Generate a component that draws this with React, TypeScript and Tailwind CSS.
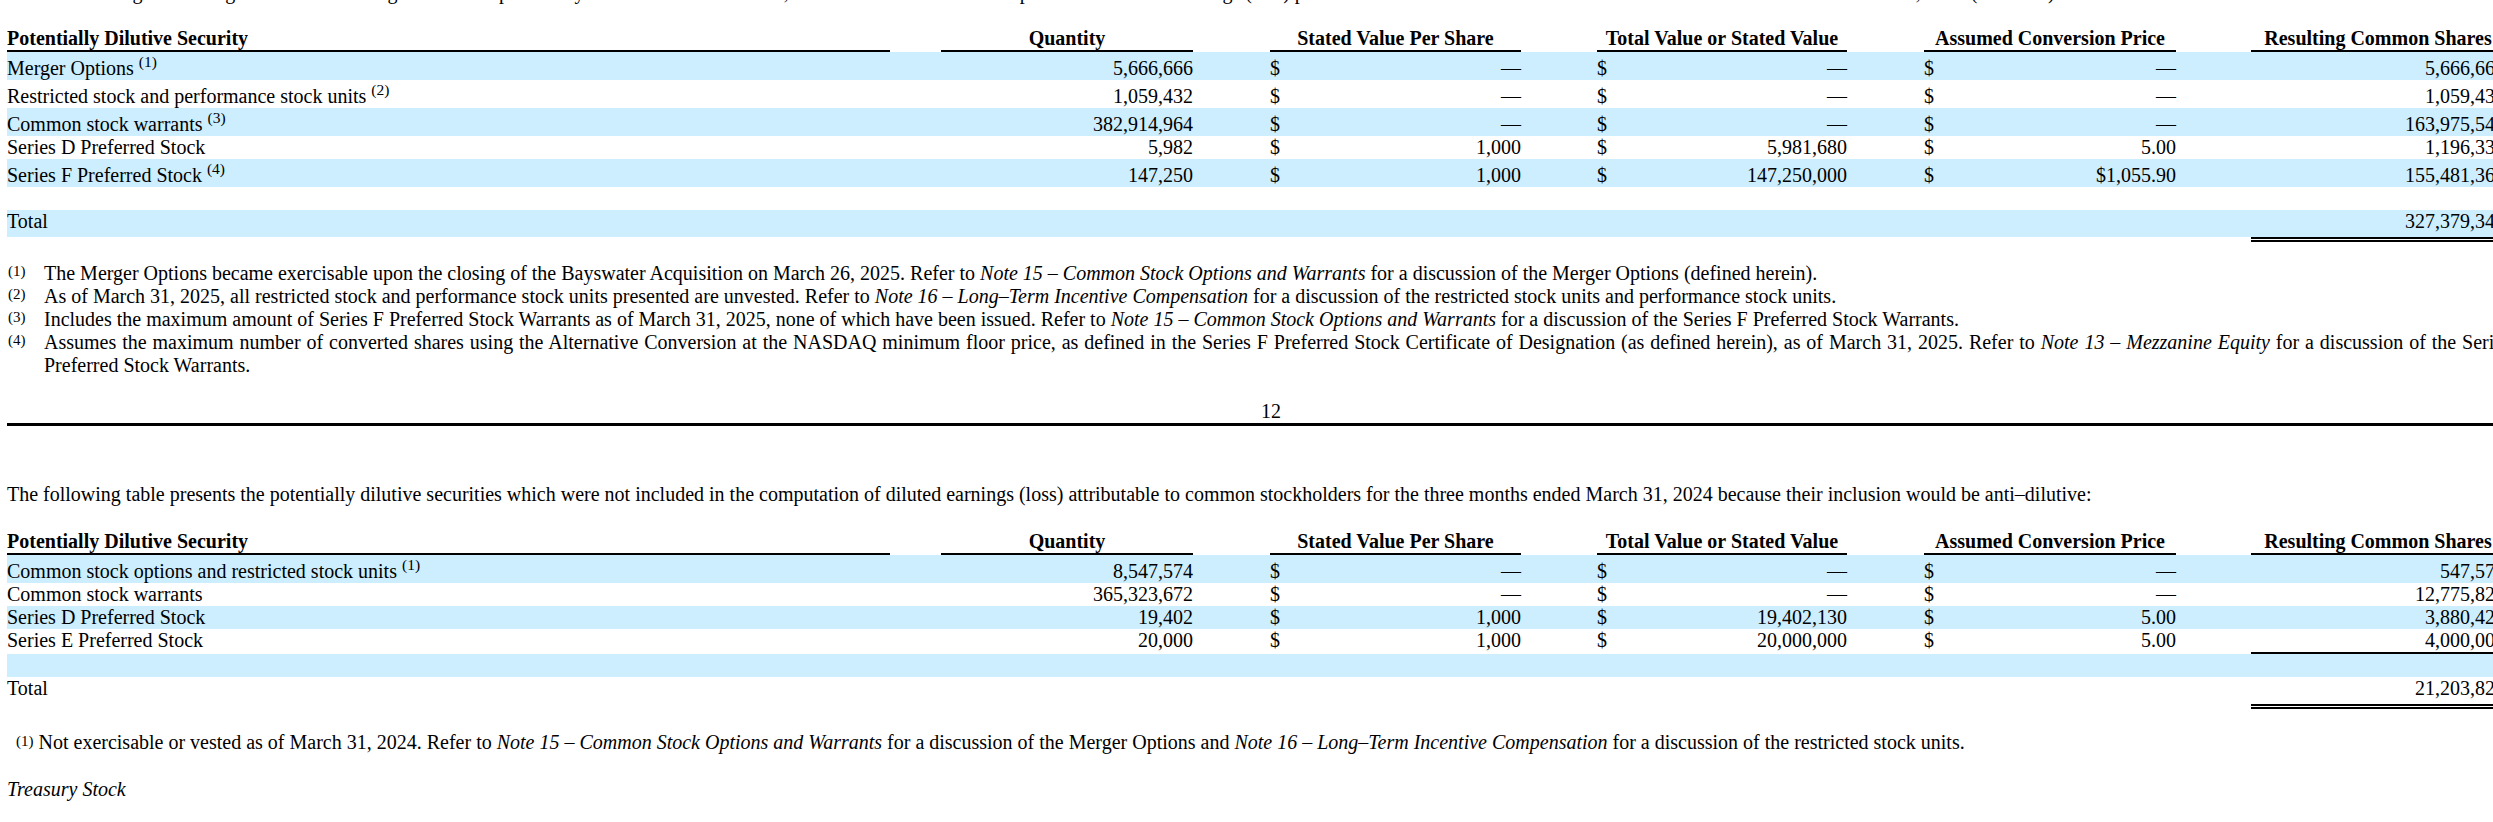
import React from "react";

type Row = {
  label?: string;
  sup?: string;
  qty?: string;
  svps?: string;
  tv?: string;
  acp?: string;
  rcs?: string;
  blue?: boolean;
  total?: boolean;
};

const table2025: Row[] = [
  { label: "Merger Options", sup: "(1)", qty: "5,666,666", svps: "—", tv: "—", acp: "—", rcs: "5,666,666", blue: true },
  { label: "Restricted stock and performance stock units", sup: "(2)", qty: "1,059,432", svps: "—", tv: "—", acp: "—", rcs: "1,059,432" },
  { label: "Common stock warrants", sup: "(3)", qty: "382,914,964", svps: "—", tv: "—", acp: "—", rcs: "163,975,544", blue: true },
  { label: "Series D Preferred Stock", qty: "5,982", svps: "1,000", tv: "5,981,680", acp: "5.00", rcs: "1,196,336" },
  { label: "Series F Preferred Stock", sup: "(4)", qty: "147,250", svps: "1,000", tv: "147,250,000", acp: "$1,055.90", rcs: "155,481,362", blue: true },
];

const table2024: Row[] = [
  { label: "Common stock options and restricted stock units", sup: "(1)", qty: "8,547,574", svps: "—", tv: "—", acp: "—", rcs: "547,574", blue: true },
  { label: "Common stock warrants", qty: "365,323,672", svps: "—", tv: "—", acp: "—", rcs: "12,775,824" },
  { label: "Series D Preferred Stock", qty: "19,402", svps: "1,000", tv: "19,402,130", acp: "5.00", rcs: "3,880,426", blue: true },
  { label: "Series E Preferred Stock", qty: "20,000", svps: "1,000", tv: "20,000,000", acp: "5.00", rcs: "4,000,000" },
];

function Money({ w, v }: { w: string; v?: string }) {
  return (
    <div className={`${w} shrink-0 flex justify-between`}>
      <span>{v ? "$" : ""}</span>
      <span>{v}</span>
    </div>
  );
}

function Header() {
  return (
    <div className="flex font-bold">
      <div className="w-[883px] shrink-0 border-b-2 border-black">Potentially Dilutive Security</div>
      <div className="w-[51px] shrink-0" />
      <div className="w-[252px] shrink-0 border-b-2 border-black text-center">Quantity</div>
      <div className="w-[77px] shrink-0" />
      <div className="w-[251px] shrink-0 border-b-2 border-black text-center">Stated Value Per Share</div>
      <div className="w-[76px] shrink-0" />
      <div className="w-[250px] shrink-0 border-b-2 border-black text-center">Total Value or Stated Value</div>
      <div className="w-[77px] shrink-0" />
      <div className="w-[252px] shrink-0 border-b-2 border-black text-center">Assumed Conversion Price</div>
      <div className="w-[75px] shrink-0" />
      <div className="w-[254px] shrink-0 border-b-2 border-black text-center whitespace-nowrap">Resulting Common Shares</div>
    </div>
  );
}

function DataRow({ r }: { r: Row }) {
  return (
    <div className={`flex ${r.blue ? "bg-[#cceeff]" : ""} ${r.sup ? "pt-[5px]" : ""} ${r.total ? "pb-[4px]" : ""} ${!r.label ? "h-[23px]" : ""}`}>
      <div className="w-[883px] shrink-0 whitespace-nowrap">
        {r.label}
        {r.sup && (
          <>
            {" "}
            <sup className="text-[15.5px]">{r.sup}</sup>
          </>
        )}
      </div>
      <div className="w-[51px] shrink-0" />
      <div className="w-[252px] shrink-0 text-right">{r.qty}</div>
      <div className="w-[77px] shrink-0" />
      <Money w="w-[251px]" v={r.svps} />
      <div className="w-[76px] shrink-0" />
      <Money w="w-[250px]" v={r.tv} />
      <div className="w-[77px] shrink-0" />
      <Money w="w-[252px]" v={r.acp} />
      <div className="w-[75px] shrink-0" />
      <div className="w-[254px] shrink-0 text-right">{r.rcs}</div>
    </div>
  );
}

// line that sits only under the last column
function ColumnRule({ double }: { double?: boolean }) {
  return (
    <div className="flex">
      <div className="w-[2244px] shrink-0" />
      <div className={`w-[254px] shrink-0 ${double ? "h-[5px] border-y-2 border-black" : "h-[2px] bg-black"}`} />
    </div>
  );
}

function Note({ mark, children }: { mark: string; children: React.ReactNode }) {
  return (
    <div className="flex">
      <div className="w-[37px] shrink-0 pl-[1px]">
        <span className="text-[15px] leading-none align-[4px]">{mark}</span>
      </div>
      <div className="w-[2484px] shrink-0 text-justify">{children}</div>
    </div>
  );
}

export default function App() {
  return (
    <div className="w-[2493px] h-[822px] overflow-hidden bg-white">
      <div className="w-[2540px] pl-[7px] font-['Liberation_Serif','Times_New_Roman',serif] text-[20px] leading-[23px] text-black">
        <p className="-mt-[19px] whitespace-nowrap">
          The diluted weighted average shares outstanding exclude the potentially dilutive securities below, as their inclusion in the computation of diluted earnings (loss) per share would have been anti–dilutive for the three months ended March 31, 2025 (in shares):
        </p>

        {/* 2025 table */}
        <div className="mt-[23px]">
          <Header />
          {table2025.map((r) => (
            <DataRow key={r.label} r={r} />
          ))}
          <DataRow r={{}} />
          <DataRow r={{ label: "Total", rcs: "327,379,340", blue: true, total: true }} />
          <ColumnRule double />
        </div>

        <div className="mt-[20px]">
          <Note mark="(1)">
            The Merger Options became exercisable upon the closing of the Bayswater Acquisition on March 26, 2025. Refer to{" "}
            <i>Note 15 – Common Stock Options and Warrants</i> for a discussion of the Merger Options (defined herein).
          </Note>
          <Note mark="(2)">
            As of March 31, 2025, all restricted stock and performance stock units presented are unvested. Refer to{" "}
            <i>Note 16 – Long–Term Incentive Compensation</i> for a discussion of the restricted stock units and performance stock units.
          </Note>
          <Note mark="(3)">
            Includes the maximum amount of Series F Preferred Stock Warrants as of March 31, 2025, none of which have been issued. Refer to{" "}
            <i>Note 15 – Common Stock Options and Warrants</i> for a discussion of the Series F Preferred Stock Warrants.
          </Note>
          <Note mark="(4)">
            Assumes the maximum number of converted shares using the Alternative Conversion at the NASDAQ minimum floor price, as defined in the Series F
            Preferred Stock Certificate of Designation (as defined herein), as of March 31, 2025. Refer to <i>Note 13 – Mezzanine Equity</i> for a
            discussion of the Series F Preferred Stock Warrants.
          </Note>
        </div>

        {/* page footer */}
        <div className="mt-[23px] w-[2528px] text-center">12</div>
        <div className="h-[3px] bg-black" />

        <p className="mt-[57px] whitespace-nowrap">
          The following table presents the potentially dilutive securities which were not included in the computation of diluted earnings (loss) attributable
          to common stockholders for the three months ended March 31, 2024 because their inclusion would be anti–dilutive:
        </p>

        {/* 2024 table */}
        <div className="mt-[24px]">
          <Header />
          {table2024.map((r) => (
            <DataRow key={r.label} r={r} />
          ))}
          <ColumnRule />
          <DataRow r={{ blue: true }} />
          <DataRow r={{ label: "Total", rcs: "21,203,824", total: true }} />
          <ColumnRule double />
        </div>

        <p className="mt-[22px] pl-[9px] whitespace-nowrap">
          <span className="text-[15px] leading-none align-[3px]">(1)</span> Not exercisable or vested as of March 31, 2024. Refer to{" "}
          <i>Note 15 – Common Stock Options and Warrants</i> for a discussion of the Merger Options and{" "}
          <i>Note 16 – Long–Term Incentive Compensation</i> for a discussion of the restricted stock units.
        </p>

        <p className="mt-[24px] italic">Treasury Stock</p>
      </div>
    </div>
  );
}
